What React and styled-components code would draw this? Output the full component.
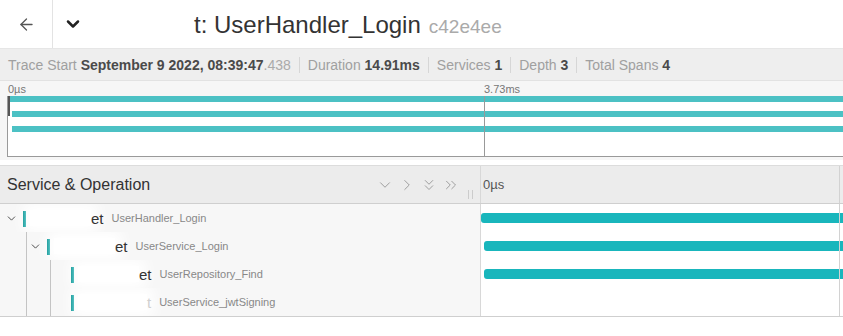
import React from 'react';
import styled, { createGlobalStyle } from 'styled-components';
import { ArrowLeft, ChevronDown, ChevronRight, ChevronsDown, ChevronsRight } from 'lucide-react';

const TOTAL = 14.91;

const spans = [
  { id: 1, depth: 0, expandable: true, blank: 61, tail: 'et', faint: false, op: 'UserHandler_Login', start: 0, dur: 14.91 },
  { id: 2, depth: 1, expandable: true, blank: 61, tail: 'et', faint: false, op: 'UserService_Login', start: 0.03, dur: 14.6 },
  { id: 3, depth: 2, expandable: false, blank: 61, tail: 'et', faint: false, op: 'UserRepository_Find', start: 0.03, dur: 9.2 },
  { id: 4, depth: 2, expandable: false, blank: 69, tail: 't', faint: true, op: 'UserService_jwtSigning', start: 11.8, dur: 2.9 },
];

const labelTicks = [0, 0.25];
const lineTicks = [0.25, 0.5, 0.75];

const fmt = (f) => (f === 0 ? '0µs' : `${(TOTAL * f).toFixed(2)}ms`);

const GlobalStyle = createGlobalStyle`
  html, body {
    margin: 0;
    padding: 0;
    overflow: hidden;
    background: #fff;
  }
  body {
    font-family: "Liberation Sans", Arial, sans-serif;
    color: #333;
  }
  #root {
    width: 1920px;
  }
`;

const Header = styled.header`
  display: flex;
  align-items: center;
  height: 48px;
  background: #fff;
  border-bottom: 1px solid #e6e6e6;
`;

const BackButton = styled.div`
  box-sizing: border-box;
  width: 53px;
  height: 100%;
  display: flex;
  align-items: center;
  justify-content: center;
  border-right: 1px solid #e3e3e3;
  color: #555;
`;

const Collapse = styled.div`
  display: flex;
  align-items: center;
  margin-left: 10px;
  color: #222;
`;

const Title = styled.h1`
  display: flex;
  align-items: baseline;
  margin: 0 0 0 3px;
  font-size: 24px;
  font-weight: 400;
  color: #333;
`;

const Redacted = styled.span`
  display: inline-block;
  width: ${(p) => p.$w}px;
  height: 1em;
  background: #fff;
  box-shadow: 0 0 ${(p) => p.$soft || 0}px ${(p) => (p.$soft ? p.$soft / 2 : 0)}px #fff;
`;

const TraceId = styled.small`
  margin-left: 8px;
  font-size: 19px;
  color: #aaa;
`;

const Summary = styled.div`
  display: flex;
  align-items: center;
  height: 31px;
  background: #eee;
  border-bottom: 1px solid #e2e2e2;
  font-size: 14px;
`;

const SummaryItem = styled.div`
  padding: 0 8px;
  border-left: ${(p) => (p.$first ? 'none' : '1px solid #d6d6d6')};
  line-height: 16px;
  white-space: nowrap;
`;

const Label = styled.span`
  color: #a0a0a0;
`;

const Value = styled.strong`
  color: #4a4a4a;
`;

const Millis = styled.span`
  color: #aaa;
`;

const Minimap = styled.section`
  background: #f6f6f6;
  padding: 0 9px 3px 7px;
`;

const TickLabels = styled.div`
  position: relative;
  height: 15px;
  font-size: 11px;
  color: #777;
`;

const TickLabel = styled.span`
  position: absolute;
  top: 2px;
  padding-left: 1px;
  line-height: 12px;
`;

const Canvas = styled.div`
  position: relative;
  height: 60px;
  background: #fff;
  border: 1px solid #9a9a9a;
  border-top: none;
`;

const MiniBar = styled.div`
  position: absolute;
  height: 6px;
  background: #4cc1c4;
`;

const TickLine = styled.div`
  position: absolute;
  top: 0;
  bottom: 0;
  width: 1px;
  background: ${(p) => p.$c || '#999'};
`;

const Handle = styled.div`
  position: absolute;
  left: 0;
  top: 0;
  width: 2px;
  height: 20px;
  background: #555;
`;

const Table = styled.section`
  margin: 5px 8px 0 0;
  border-top: 1px solid #dcdcdc;
  border-bottom: 1px solid #cfcfcf;
`;

const HeaderRow = styled.div`
  display: flex;
  height: 37px;
  background: #ececec;
  border-bottom: 1px solid #cfcfcf;
`;

const NameHeader = styled.div`
  position: relative;
  box-sizing: border-box;
  width: 480px;
  display: flex;
  align-items: center;
  padding-left: 7px;
  font-size: 16px;
  color: #333;
`;

const HeaderTools = styled.div`
  display: flex;
  align-items: center;
  gap: 4px;
  margin-left: auto;
  margin-right: 20px;
  color: #959595;
`;

const Grip = styled.div`
  position: absolute;
  right: 7px;
  bottom: 4px;
  width: 3px;
  height: 9px;
  border-left: 1px solid #ccc;
  border-right: 1px solid #ccc;
`;

const TimeCell = styled.div`
  position: relative;
  flex: 1;
  border-left: 1px solid #d8d8d8;
  display: flex;
  align-items: center;
  font-size: 13px;
  color: #555;
`;

const TimeHeaderLabel = styled.span`
  padding-left: 2px;
`;

const Row = styled.div`
  display: flex;
  height: 28px;
`;

const NameCell = styled.div`
  box-sizing: border-box;
  width: 480px;
  display: flex;
  align-items: stretch;
  padding-left: 3px;
  background: #f7f7f7;
  overflow: hidden;
`;

const Guide = styled.span`
  position: relative;
  z-index: 1;
  flex: none;
  width: 24px;
  border-right: 1px solid #c4c4c4;
  box-sizing: border-box;
`;

const Toggle = styled.span`
  flex: none;
  width: 17px;
  display: flex;
  align-items: center;
  justify-content: center;
  color: #444;
`;

const ColorBar = styled.span`
  position: relative;
  z-index: 1;
  flex: none;
  align-self: center;
  width: 3px;
  height: 16px;
  margin: 2px 0 0 3px;
  background: linear-gradient(90deg, #249f9f, #55c2c2);
`;

const SpanName = styled.span`
  display: flex;
  align-items: center;
  margin-left: 4px;
  white-space: nowrap;
`;

const Service = styled.span`
  font-size: 15px;
  color: ${(p) => (p.$faint ? '#d0d0d0' : '#333')};
`;

const Operation = styled.span`
  margin-left: 8px;
  font-size: 11px;
  color: #888;
`;

const SpanBar = styled.div`
  position: absolute;
  top: 9px;
  height: 10px;
  border-radius: 3px 0 0 3px;
  background: #19b6bc;
`;

const pct = (v) => `${(v / TOTAL) * 100}%`;

function Ticks() {
  return lineTicks.map((t) => <TickLine key={t} $c="#d2d2d2" style={{ left: `${t * 100}%` }} />);
}

export default function App() {
  return (
    <>
      <GlobalStyle />
      <Header>
        <BackButton>
          <ArrowLeft size={19} strokeWidth={1.6} />
        </BackButton>
        <Collapse>
          <ChevronDown size={20} strokeWidth={3} />
        </Collapse>
        <Title>
          <Redacted $w={108} />
          t: UserHandler_Login
          <TraceId>c42e4ee</TraceId>
        </Title>
      </Header>

      <Summary>
        <SummaryItem $first>
          <Label>Trace Start </Label>
          <Value>September 9 2022, 08:39:47</Value>
          <Millis>.438</Millis>
        </SummaryItem>
        <SummaryItem>
          <Label>Duration </Label>
          <Value>14.91ms</Value>
        </SummaryItem>
        <SummaryItem>
          <Label>Services </Label>
          <Value>1</Value>
        </SummaryItem>
        <SummaryItem>
          <Label>Depth </Label>
          <Value>3</Value>
        </SummaryItem>
        <SummaryItem>
          <Label>Total Spans </Label>
          <Value>4</Value>
        </SummaryItem>
      </Summary>

      <Minimap>
        <TickLabels>
          {labelTicks.map((t) => (
            <TickLabel key={t} style={{ left: `${t * 100}%` }}>
              {fmt(t)}
            </TickLabel>
          ))}
        </TickLabels>
        <Canvas>
          {spans.map((s, i) => (
            <MiniBar
              key={s.id}
              style={{ top: i * 15, left: pct(s.start), width: pct(s.dur) }}
            />
          ))}
          {lineTicks.map((t) => (
            <TickLine key={t} style={{ left: `${t * 100}%` }} />
          ))}
          <Handle />
        </Canvas>
      </Minimap>

      <Table>
        <HeaderRow>
          <NameHeader>
            Service &amp; Operation
            <HeaderTools>
              <ChevronDown size={18} strokeWidth={1.2} />
              <ChevronRight size={18} strokeWidth={1.2} />
              <ChevronsDown size={18} strokeWidth={1.2} />
              <ChevronsRight size={18} strokeWidth={1.2} />
            </HeaderTools>
            <Grip />
          </NameHeader>
          <TimeCell>
            <TimeHeaderLabel>{fmt(0)}</TimeHeaderLabel>
            <Ticks />
          </TimeCell>
        </HeaderRow>

        {spans.map((s) => (
          <Row key={s.id}>
            <NameCell>
              {Array.from({ length: s.depth }).map((_, i) => (
                <Guide key={i} />
              ))}
              <Toggle>{s.expandable && <ChevronDown size={13} strokeWidth={1.8} />}</Toggle>
              <ColorBar />
              <SpanName>
                <Redacted $w={s.blank} $soft={14} />
                <Service $faint={s.faint}>{s.tail}</Service>
                <Operation>{s.op}</Operation>
              </SpanName>
            </NameCell>
            <TimeCell>
              <SpanBar style={{ left: pct(s.start), width: pct(s.dur) }} />
              <Ticks />
            </TimeCell>
          </Row>
        ))}
      </Table>
    </>
  );
}
